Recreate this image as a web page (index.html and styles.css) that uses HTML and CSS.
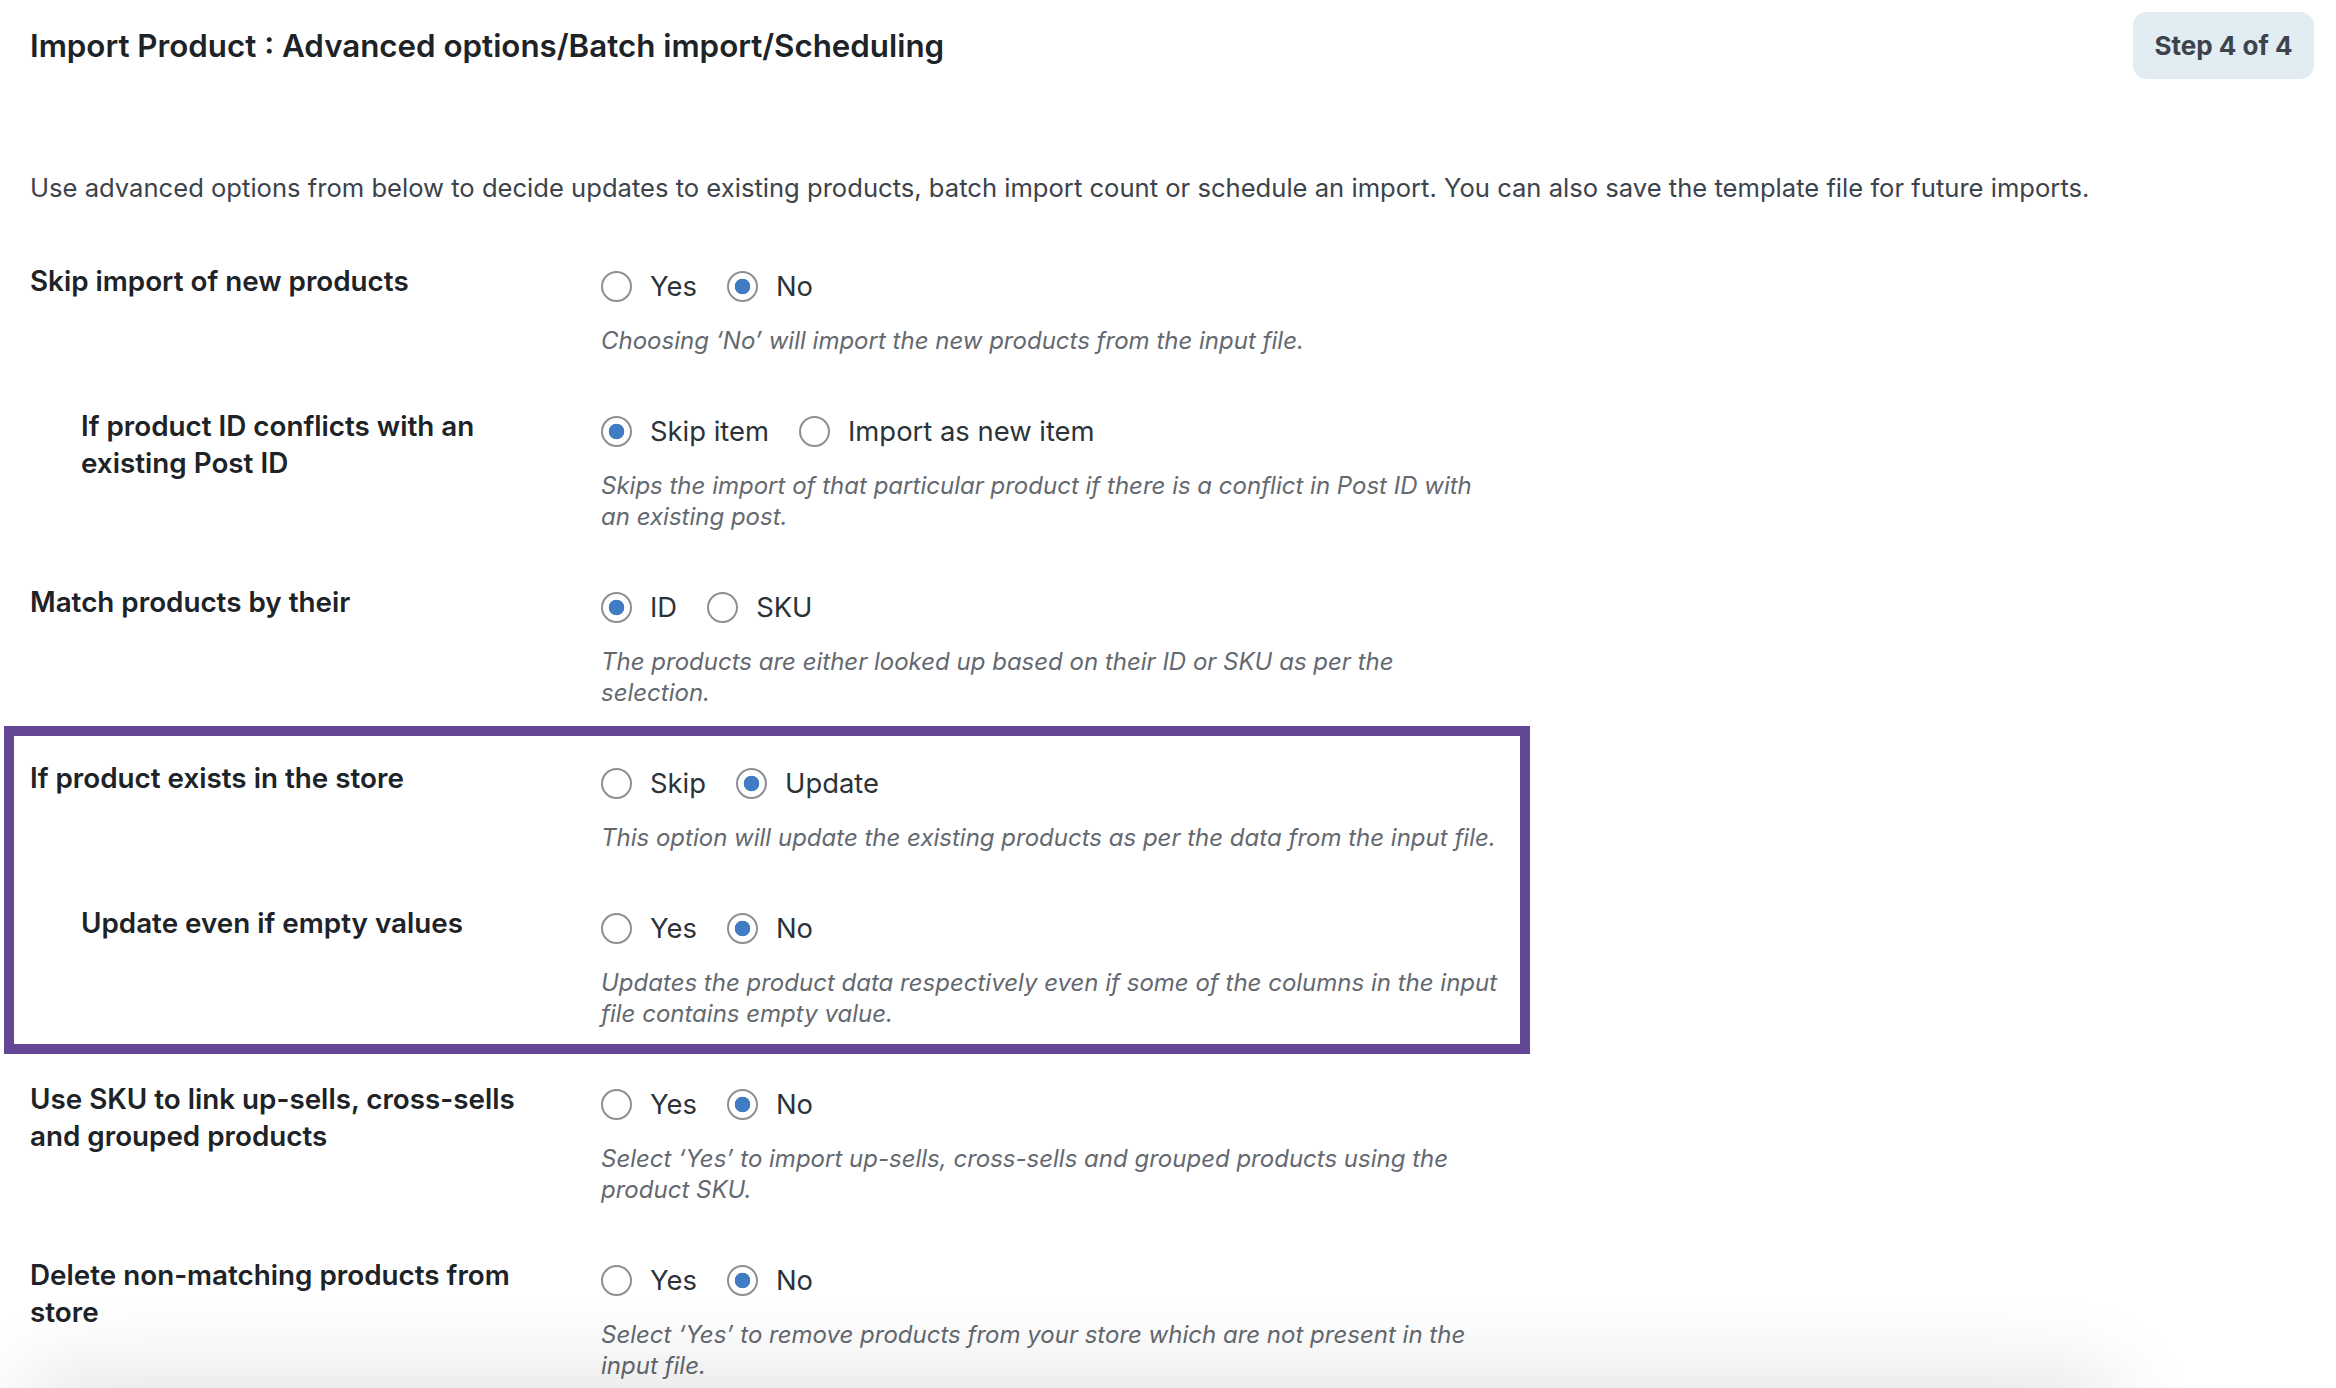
FILE: index.html
```html
<!DOCTYPE html>
<html lang="en">
<head>
<meta charset="utf-8">
<title>Import Product</title>
<link rel="stylesheet" href="styles.css">
</head>
<body>
<div class="page">
  <header class="header">
    <h1 class="title">Import Product : Advanced options/Batch import/Scheduling</h1>
    <span class="step">Step 4 of 4</span>
  </header>

  <p class="intro">Use advanced options from below to decide updates to existing products, batch import count or schedule an import. You can also save the template file for future imports.</p>

  <div class="rows">
    <div class="row">
      <div class="label">Skip import of new products</div>
      <div class="field">
        <div class="radios">
          <label class="opt"><input type="radio" name="skipnew"> Yes</label>
          <label class="opt"><input type="radio" name="skipnew" checked> No</label>
        </div>
        <p class="desc">Choosing ‘No’ will import the new products from the input file.</p>
      </div>
    </div>

    <div class="row">
      <div class="label sub">If product ID conflicts with an existing Post ID</div>
      <div class="field">
        <div class="radios">
          <label class="opt"><input type="radio" name="conflict" checked> Skip item</label>
          <label class="opt"><input type="radio" name="conflict"> Import as new item</label>
        </div>
        <p class="desc">Skips the import of that particular product if there is a conflict in Post ID with an existing post.</p>
      </div>
    </div>

    <div class="row">
      <div class="label">Match products by their</div>
      <div class="field">
        <div class="radios">
          <label class="opt"><input type="radio" name="match" checked> ID</label>
          <label class="opt"><input type="radio" name="match"> SKU</label>
        </div>
        <p class="desc">The products are either looked up based on their ID or SKU as per the selection.</p>
      </div>
    </div>

    <div class="row">
      <div class="label">If product exists in the store</div>
      <div class="field">
        <div class="radios">
          <label class="opt"><input type="radio" name="exists"> Skip</label>
          <label class="opt"><input type="radio" name="exists" checked> Update</label>
        </div>
        <p class="desc">This option will update the existing products as per the data from the input file.</p>
      </div>
    </div>

    <div class="row">
      <div class="label sub">Update even if empty values</div>
      <div class="field">
        <div class="radios">
          <label class="opt"><input type="radio" name="empty"> Yes</label>
          <label class="opt"><input type="radio" name="empty" checked> No</label>
        </div>
        <p class="desc">Updates the product data respectively even if some of the columns in the input file contains empty value.</p>
      </div>
    </div>

    <div class="row">
      <div class="label">Use SKU to link up-sells, cross-sells and grouped products</div>
      <div class="field">
        <div class="radios">
          <label class="opt"><input type="radio" name="sku"> Yes</label>
          <label class="opt"><input type="radio" name="sku" checked> No</label>
        </div>
        <p class="desc">Select ‘Yes’ to import up-sells, cross-sells and grouped products using the product SKU.</p>
      </div>
    </div>

    <div class="row">
      <div class="label">Delete non-matching products from store</div>
      <div class="field">
        <div class="radios">
          <label class="opt"><input type="radio" name="del"> Yes</label>
          <label class="opt"><input type="radio" name="del" checked> No</label>
        </div>
        <p class="desc">Select ‘Yes’ to remove products from your store which are not present in the input file.</p>
      </div>
    </div>
  </div>

  <div class="highlight"></div>
  <div class="footer-shadow"></div>
</div>
</body>
</html>
```

FILE: styles.css
```css
* { box-sizing: border-box; }

html, body {
  margin: 0;
  padding: 0;
  background: #ffffff;
}

body {
  font-family: Inter, "Noto Sans", "Liberation Sans", sans-serif;
  color: #1d2327;
}

.page {
  position: relative;
  width: 2336px;
  height: 1388px;
  overflow: hidden;
  background: #fff;
}

.header {
  display: flex;
  justify-content: space-between;
  align-items: center;
  padding: 12px 22px 0 30px;
}

.title {
  margin: 0;
  font-size: 31.3px;
  font-weight: 600;
  line-height: 40px;
  color: #1d2327;
}

.step {
  display: flex;
  align-items: center;
  justify-content: center;
  width: 181px;
  height: 67px;
  border-radius: 14px;
  background: #e1ecf3;
  color: #3c434a;
  font-size: 26px;
  font-weight: 700;
}

.intro {
  margin: 93px 0 0 30px;
  font-size: 25.6px;
  line-height: 31px;
  color: #3c434a;
}

.rows {
  margin-top: 60px;
  padding-left: 30px;
}

.row {
  display: grid;
  grid-template-columns: 571px 898px;
  padding-bottom: 52px;
}

.label {
  font-size: 27.8px;
  font-weight: 600;
  line-height: 37px;
  color: #1d2327;
  padding-right: 56px;
}

.label.sub {
  padding-left: 51px;
}

.field {
  display: flex;
  flex-direction: column;
}

.radios {
  display: flex;
  align-items: center;
  height: 46px;
  gap: 30px;
}

.opt {
  display: flex;
  align-items: center;
  gap: 18px;
  font-size: 27.4px;
  color: #2c3338;
}

.opt input {
  appearance: none;
  -webkit-appearance: none;
  margin: 0;
  width: 31px;
  height: 31px;
  border: 2px solid #8c8f94;
  border-radius: 50%;
  background: #fff;
  flex: none;
}

.opt input:checked {
  background: radial-gradient(circle, #3f7cc4 0 7.5px, #fff 8.1px);
}

.desc {
  margin: 16px 0 0 0;
  font-size: 24px;
  font-style: italic;
  line-height: 31px;
  color: #646970;
}

.highlight {
  position: absolute;
  left: 4px;
  top: 726px;
  width: 1526px;
  height: 328px;
  border: 10px solid #634694;
  pointer-events: none;
}

.footer-shadow {
  position: absolute;
  left: 30px;
  width: 2080px;
  bottom: -70px;
  height: 70px;
  border-radius: 40px;
  box-shadow: 0 0 90px 10px rgba(0, 0, 0, 0.13);
  pointer-events: none;
}
```
